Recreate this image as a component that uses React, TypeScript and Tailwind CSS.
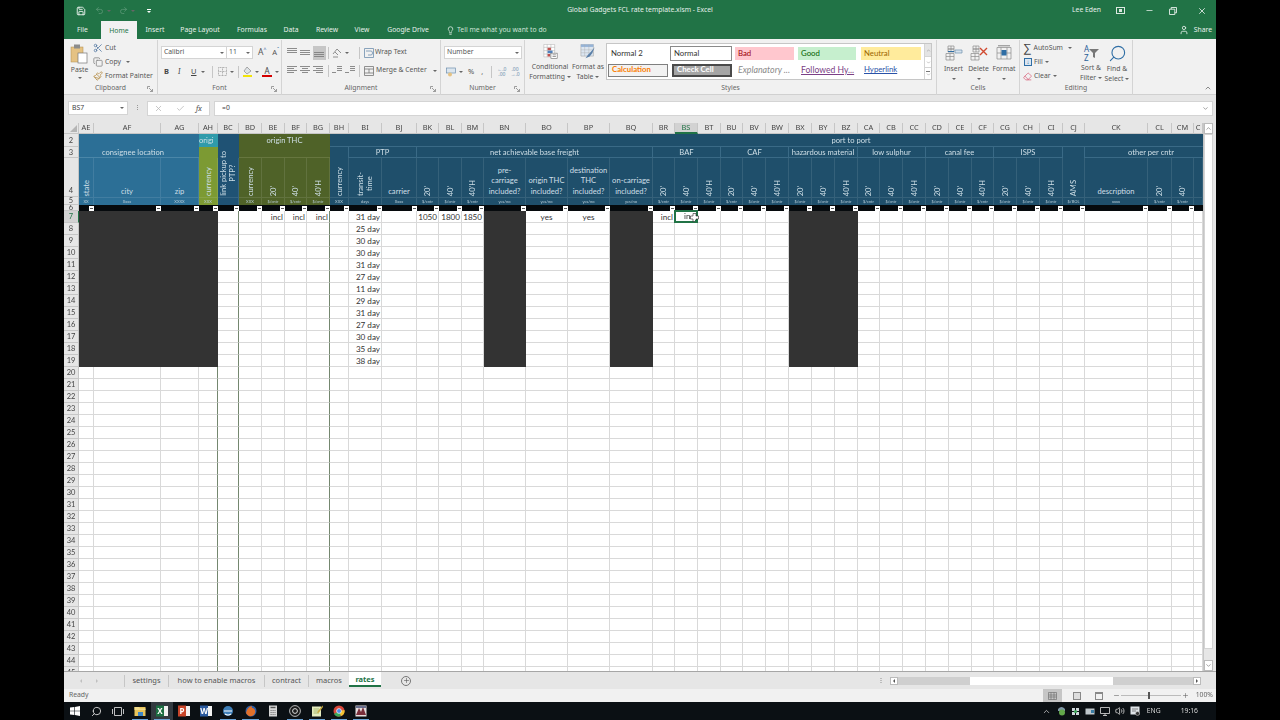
import React from "react";
import { ChevronDown, ChevronUp, Lightbulb, Minus, Plus, Redo2, Save, Search, Undo2, User, X, Check, Scissors, Copy, Paintbrush, Eraser, Volume2 } from "lucide-react";

const cols: [string, number][] = [
    ["AE", 15], ["AF", 67], ["AG", 38], ["AH", 19], ["BC", 21], ["BD", 23], ["BE", 23], ["BF", 22], ["BG", 23], ["BH", 19],
    ["BI", 33], ["BJ", 35], ["BK", 22], ["BL", 23], ["BM", 22], ["BN", 42], ["BO", 42], ["BP", 42], ["BQ", 43], ["BR", 22],
    ["BS", 23], ["BT", 23], ["BU", 22], ["BV", 23], ["BW", 23], ["BX", 23], ["BY", 23], ["BZ", 23], ["CA", 22], ["CB", 23],
    ["CC", 23], ["CD", 23], ["CE", 23], ["CF", 22], ["CG", 23], ["CH", 23], ["CI", 23], ["CJ", 22], ["CK", 63], ["CL", 24],
    ["CM", 22], ["C", 9],
];

const names = cols.map((c) => c[0]);
const spanWidth = (from: string, to: string) =>
    cols.slice(names.indexOf(from), names.indexOf(to) + 1).reduce((sum, c) => sum + c[1], 0);

const BLUE = "bg-[#2c6f96]";
const DARK = "bg-[#1f4f6b]";
const NAVY = "bg-[#1f5274]";
const OLIVE = "bg-[#4f6228]";
const LIME = "bg-[#7c9a33]";
const TEAL = "bg-[#2f9bab]";

const colColor = (name: string) => {
    if (["AE", "AF", "AG"].includes(name)) return BLUE;
    if (name === "AH") return LIME;
    if (name === "BC") return NAVY;
    if (["BD", "BE", "BF", "BG"].includes(name)) return OLIVE;
    return DARK;
};

type Band = { from: string; to: string; color: string; text?: string; extra?: string };

const band2: Band[] = [
    { from: "AE", to: "AG", color: BLUE },
    { from: "AH", to: "AH", color: TEAL, text: "origi", extra: "justify-start" },
    { from: "BC", to: "BC", color: NAVY },
    { from: "BD", to: "BG", color: OLIVE, text: "origin THC" },
    { from: "BH", to: "BJ", color: DARK, extra: "border-b border-[#3a6a86]" },
    { from: "BK", to: "C", color: DARK, text: "port to port", extra: "pl-[82px] border-b border-[#3a6a86]" },
];

const band3: Band[] = [
    { from: "AE", to: "AG", color: BLUE, text: "consignee location", extra: "pr-[12px] border-b border-[#4a86a8]" },
    { from: "AH", to: "AH", color: LIME },
    { from: "BC", to: "BC", color: NAVY },
    { from: "BD", to: "BG", color: OLIVE, extra: "border-b border-[#66763f]" },
    { from: "BH", to: "BH", color: DARK, extra: "border-r border-[#3a6a86]" },
    { from: "BI", to: "BJ", color: DARK, text: "PTP", extra: "border-r border-b border-[#3a6a86]" },
    { from: "BK", to: "BQ", color: DARK, text: "net achievable base freight", extra: "border-r border-b border-[#3a6a86]" },
    { from: "BR", to: "BT", color: DARK, text: "BAF", extra: "border-r border-b border-[#3a6a86]" },
    { from: "BU", to: "BW", color: DARK, text: "CAF", extra: "border-r border-b border-[#3a6a86]" },
    { from: "BX", to: "BZ", color: DARK, text: "hazardous material", extra: "border-r border-b border-[#3a6a86]" },
    { from: "CA", to: "CC", color: DARK, text: "low sulphur", extra: "border-r border-b border-[#3a6a86]" },
    { from: "CD", to: "CF", color: DARK, text: "canal fee", extra: "border-r border-b border-[#3a6a86]" },
    { from: "CG", to: "CI", color: DARK, text: "ISPS", extra: "border-r border-b border-[#3a6a86]" },
    { from: "CJ", to: "CJ", color: DARK, extra: "border-r border-[#3a6a86]" },
    { from: "CK", to: "C", color: DARK, text: "other per cntr", extra: "pl-[14px] border-b border-[#3a6a86]" },
];

const sizes = ["20'", "40'", "40'H"];
const vertical: Record<string, string[]> = {
    AE: ["state"], AH: ["currency"], BC: ["link pickup to", "PTP?"], BD: ["currency"], BH: ["currency"], BI: ["transit-", "time"], CJ: ["AMS"],
    CL: ["20'"], CM: ["40'"],
};
[["BE", "BF", "BG"], ["BK", "BL", "BM"], ["BR", "BS", "BT"], ["BU", "BV", "BW"], ["BX", "BY", "BZ"], ["CA", "CB", "CC"], ["CD", "CE", "CF"], ["CG", "CH", "CI"]].forEach((set) =>
    set.forEach((n, i) => (vertical[n] = [sizes[i]]))
);
const horizontal: Record<string, string[]> = {
    AF: ["city"], AG: ["zip"], BJ: ["carrier"], BN: ["pre-", "carriage", "included?"], BO: ["origin THC", "included?"],
    BP: ["destination", "THC", "included?"], BQ: ["on-carriage", "included?"], CK: ["description"],
};

const unitFor = (n: string) => {
    if (n === "AE") return "XX";
    if (n === "AF" || n === "BJ") return "Xxxx";
    if (n === "AG") return "XXXX";
    if (["AH", "BD", "BH"].includes(n)) return "XXX";
    if (n === "BC" || n === "C") return "";
    if (n === "BI") return "days";
    if (["BN", "BO", "BP", "BQ"].includes(n)) return "yes/no";
    if (n === "CJ") return "$/BOL";
    if (n === "CK") return "xxxx";
    return "$/cntr";
};

const darkCols = ["AE", "AF", "AG", "AH", "BN", "BQ", "BX", "BY", "BZ"];
const days = [31, 25, 30, 30, 31, 27, 11, 29, 31, 27, 30, 35, 38];
const row7: Record<string, string> = { BE: "incl", BF: "incl", BG: "incl", BK: "1050", BL: "1800", BM: "1850", BR: "incl" };

const Caret = () => <span className="inline-block w-0 h-0 border-x-[2px] border-t-[2px] border-x-transparent border-t-[#666]" />;

const Launcher = () => (
    <svg width="6" height="6" viewBox="0 0 6 6" fill="none" stroke="#888" strokeWidth="0.8">
        <path d="M0.5 3V0.5H3M2 2L5.5 5.5M5.5 3V5.5H3" />
    </svg>
);

const Lines = ({ rows }: { rows: [number, number, number][] }) => (
    <svg width="11" height="11" viewBox="0 0 11 11" stroke="#808080" strokeWidth="0.9">
        {rows.map(([y, a, b], i) => (
            <path key={i} d={`M${a} ${y}.5H${b}`} />
        ))}
    </svg>
);

const Sep = ({ cls = "h-[12px]" }: { cls?: string }) => <span className={`block w-px bg-[#c6c6c6] ${cls}`} />;

const Group = ({ w, label, launcher, children }: { w: string; label: string; launcher?: boolean; children: React.ReactNode }) => (
    <div className={`${w} flex flex-col h-[55px] border-r border-[#d4d4d4] whitespace-nowrap`}>
        <div className="h-[42px] flex">{children}</div>
        <div className="h-[13px] flex items-center justify-center relative text-[6.8px] text-[#666]">
            {label}
            {launcher && (
                <span className="absolute right-[4px] top-[4px] flex">
                    <Launcher />
                </span>
            )}
        </div>
    </div>
);

const TitleBar = () => (
    <div className="h-[39px] bg-[#217346] flex flex-col text-[#e8f1ec] shrink-0">
        <div className="h-[21px] flex items-center">
            <div className="flex-1 flex items-center gap-[8px]">
                <Save size={10} className="text-white ml-[12px]" />
                <span className="flex items-center gap-[3px] ml-[1px] text-[#5f9a79]">
                    <Undo2 size={9} />
                    <Caret />
                </span>
                <span className="flex items-center gap-[3px] text-[#5f9a79]">
                    <Redo2 size={9} />
                    <Caret />
                </span>
                <span className="flex flex-col items-center ml-[4px] gap-[1px]">
                    <span className="w-[4px] h-px bg-white" />
                    <span className="w-0 h-0 border-x-[2px] border-t-[2px] border-x-transparent border-t-white" />
                </span>
            </div>
            <span className="text-[6.8px]">Global Gadgets FCL rate template.xlsm - Excel</span>
            <div className="flex-1 flex items-center justify-end text-[6.8px]">
                <span>Lee Eden</span>
                <span className="w-[9px] h-[7px] ml-[15px] border border-[#dbe8e0] flex items-center justify-center">
                    <span className="w-[3px] h-[3px] bg-[#dbe8e0]" />
                </span>
                <Minus size={9} className="ml-[20px]" />
                <svg className="ml-[15px]" width="8" height="8" viewBox="0 0 8 8" fill="none" stroke="#fff" strokeWidth="0.8">
                    <path d="M0.5 2.2H5.8V7.5H0.5ZM2.2 2.2V0.5H7.5V5.8H5.8" />
                </svg>
                <X size={10} className="ml-[20px] mr-[9px]" />
            </div>
        </div>
        <div className="h-[18px] flex items-center text-[6.8px]">
            <span className="w-[37px] text-center">File</span>
            <span className="w-[36px] h-[18px] leading-[19px] text-center bg-[#f1f1f1] text-[#217346]">Home</span>
            <span className="w-[36px] text-center">Insert</span>
            <span className="w-[54px] text-center">Page Layout</span>
            <span className="w-[50px] text-center">Formulas</span>
            <span className="w-[28px] text-center">Data</span>
            <span className="w-[44px] text-center">Review</span>
            <span className="w-[26px] text-center">View</span>
            <span className="w-[66px] text-center">Google Drive</span>
            <Lightbulb size={9} className="ml-[5px]" />
            <span className="ml-[2px] text-[#cfe3d8]">Tell me what you want to do</span>
            <div className="flex-1 flex justify-end items-center pr-[4px]">
                <User size={10} />
                <span className="ml-[5px]">Share</span>
            </div>
        </div>
    </div>
);

const PasteIcon = () => (
    <svg width="19" height="20" viewBox="0 0 19 20">
        <rect x="1" y="3" width="12" height="15" fill="#e5c283" stroke="#b08c4e" strokeWidth="0.5" />
        <rect x="4" y="0.5" width="6" height="4" fill="#8c8c8c" />
        <rect x="8" y="9" width="9" height="10" fill="#fff" stroke="#777" strokeWidth="0.7" />
    </svg>
);

const ClipboardGroup = () => (
    <Group w="w-[94px]" label="Clipboard" launcher>
        <div className="w-[28px] flex flex-col items-center pl-[3px] pt-[4px]">
            <PasteIcon />
            <span className="text-[6.8px] text-[#555] mt-[1px] leading-[9px]">Paste</span>
            <span className="mt-[3px] flex">
                <Caret />
            </span>
        </div>
        <div className="flex flex-col text-[6.8px] text-[#555] pt-[2px] gap-[2px] ml-[1px]">
            <span className="flex items-center h-[12px] gap-[2px]">
                <Scissors size={10} className="text-[#5c7ea6]" />
                Cut
            </span>
            <span className="flex items-center h-[12px] gap-[2px]">
                <Copy size={10} className="text-[#888]" />
                Copy
                <span className="ml-[3px] flex">
                    <Caret />
                </span>
            </span>
            <span className="flex items-center h-[12px] gap-[2px]">
                <Paintbrush size={10} className="text-[#b8914e]" />
                Format Painter
            </span>
        </div>
    </Group>
);

const FontGroup = () => (
    <Group w="w-[124px]" label="Font" launcher>
        <div className="flex flex-col pl-[3px] pt-[6px]">
            <div className="flex items-center h-[13px]">
                <div className="w-[66px] h-[13px] bg-white border border-[#d4d4d4] flex items-center justify-between px-[2px] text-[6.8px] text-[#555]">
                    Calibri
                    <Caret />
                </div>
                <div className="w-[26px] h-[13px] bg-white border border-[#d4d4d4] border-l-0 flex items-center justify-between px-[2px] text-[6.8px] text-[#555]">
                    11
                    <Caret />
                </div>
                <span className="ml-[5px] text-[8.5px] text-[#555]">A</span>
                <span className="text-[5px] -mt-[5px] text-[#2a6099]">^</span>
                <span className="ml-[6px] text-[7.5px] text-[#555]">A</span>
                <span className="text-[5px] -mt-[5px] text-[#2a6099]">ˇ</span>
            </div>
            <div className="flex items-center h-[13px] mt-[6px] text-[7.5px] text-[#444] pl-[3px]">
                <span className="font-bold w-[14px]">B</span>
                <span className="italic font-serif w-[13px]">I</span>
                <span className="underline w-[10px]">U</span>
                <Caret />
                <span className="ml-[7px]">
                    <Sep />
                </span>
                <svg className="ml-[5px]" width="9" height="9" viewBox="0 0 9 9" fill="none" stroke="#999" strokeWidth="0.7" strokeDasharray="1 0.5">
                    <path d="M0.5 0.5H8.5V8.5H0.5ZM4.5 0.5V8.5M0.5 4.5H8.5" />
                </svg>
                <span className="ml-[3px] flex">
                    <Caret />
                </span>
                <span className="ml-[4px]">
                    <Sep />
                </span>
                <svg className="ml-[3px]" width="11" height="11" viewBox="0 0 11 11">
                    <path d="M5 1L9 5L5 8L2 5Z" fill="#dfe4e8" stroke="#777" strokeWidth="0.6" />
                    <rect x="1" y="9" width="9" height="2" fill="#f2e409" />
                </svg>
                <span className="ml-[2px] flex">
                    <Caret />
                </span>
                <span className="ml-[3px] w-[10px] flex flex-col items-center leading-[8px] text-[8px]">
                    A<span className="w-[10px] h-[2px] bg-[#d40000]" />
                </span>
                <span className="ml-[3px] flex">
                    <Caret />
                </span>
            </div>
        </div>
    </Group>
);

const AlignmentGroup = () => (
    <Group w="w-[159px]" label="Alignment" launcher>
        <div className="flex flex-col pl-[5px] pt-[5px]">
            <div className="flex items-center h-[15px]">
                <span className="w-[13px] flex">
                    <Lines rows={[[1, 0, 10], [3, 0, 10], [5, 0, 10]]} />
                </span>
                <span className="w-[13px] flex">
                    <Lines rows={[[3, 0, 10], [5, 0, 10], [7, 0, 10]]} />
                </span>
                <span className="w-[13px] h-[14px] bg-[#c6c6c6] flex items-center justify-center">
                    <Lines rows={[[5, 0, 10], [7, 0, 10], [9, 0, 10]]} />
                </span>
                <span className="ml-[2px]">
                    <Sep />
                </span>
                <svg className="ml-[3px]" width="10" height="10" viewBox="0 0 10 10" fill="none" stroke="#777" strokeWidth="0.8">
                    <path d="M1 6L5 1L9 5M3 4L6 7M1 9L6 9" />
                </svg>
                <span className="ml-[3px] flex">
                    <Caret />
                </span>
                <span className="ml-[10px]">
                    <Sep />
                </span>
                <svg className="ml-[4px]" width="10" height="10" viewBox="0 0 10 10" fill="none" stroke="#6e8fae" strokeWidth="0.8">
                    <path d="M0.5 0.5H9.5V9.5H0.5ZM2 3H7Q8.5 3 8.5 5T7 7H4" />
                </svg>
                <span className="ml-[1px] text-[6.8px] text-[#555]">Wrap Text</span>
            </div>
            <div className="flex items-center h-[15px] mt-[3px]">
                <span className="w-[13px] flex">
                    <Lines rows={[[1, 0, 10], [3, 0, 7], [5, 0, 10], [7, 0, 7]]} />
                </span>
                <span className="w-[13px] flex">
                    <Lines rows={[[1, 0, 10], [3, 2, 8], [5, 0, 10], [7, 2, 8]]} />
                </span>
                <span className="w-[13px] flex">
                    <Lines rows={[[1, 0, 10], [3, 3, 10], [5, 0, 10], [7, 3, 10]]} />
                </span>
                <span className="ml-[2px]">
                    <Sep />
                </span>
                <span className="ml-[3px] w-[13px] flex">
                    <Lines rows={[[1, 5, 10], [3, 5, 10], [5, 5, 10], [7, 0, 4]]} />
                </span>
                <span className="w-[13px] flex">
                    <Lines rows={[[1, 5, 10], [3, 5, 10], [5, 5, 10], [7, 0, 4]]} />
                </span>
                <span className="ml-[1px]">
                    <Sep />
                </span>
                <svg className="ml-[4px]" width="10" height="10" viewBox="0 0 10 10" fill="none" stroke="#777" strokeWidth="0.8">
                    <path d="M0.5 0.5H9.5V9.5H0.5ZM0.5 3H9.5M0.5 7H9.5M5 3V7" />
                </svg>
                <span className="ml-[2px] text-[6.8px] text-[#555]">Merge &amp; Center</span>
                <span className="ml-[6px] flex">
                    <Caret />
                </span>
            </div>
        </div>
    </Group>
);

const NumberGroup = () => (
    <Group w="w-[84px]" label="Number" launcher>
        <div className="flex flex-col pl-[3px] pt-[6px]">
            <div className="w-[78px] h-[13px] bg-white border border-[#d4d4d4] flex items-center justify-between px-[2px] text-[6.8px] text-[#555]">
                Number
                <Caret />
            </div>
            <div className="flex items-center h-[13px] mt-[6px] text-[7.5px] text-[#555] pl-[2px]">
                <svg width="10" height="10" viewBox="0 0 10 10">
                    <rect x="0.5" y="1" width="9" height="5" fill="#dce6ef" stroke="#6e8fae" strokeWidth="0.7" />
                    <circle cx="4" cy="7.5" r="2" fill="#e5c283" />
                </svg>
                <span className="ml-[3px] flex">
                    <Caret />
                </span>
                <span className="ml-[5px]">%</span>
                <span className="ml-[7px]">,</span>
                <span className="ml-[8px]">
                    <Sep />
                </span>
                <span className="ml-[5px] text-[5px] leading-[5px] text-center text-[#6e8fae]">
                    ←.0
                    <br />
                    .00
                </span>
                <span className="ml-[4px] text-[5px] leading-[5px] text-center text-[#6e8fae]">
                    .00
                    <br />
                    →.0
                </span>
            </div>
        </div>
    </Group>
);

const StyleCell = ({ cls, children }: { cls: string; children: React.ReactNode }) => (
    <span className={`flex items-center px-[3px] leading-none h-[13px] ${cls}`}>{children}</span>
);

const StylesGroup = () => (
    <Group w="w-[412px]" label="Styles">
        <div className="w-[40px] flex flex-col items-center pt-[4px] ml-[5px] text-[6.8px] leading-[10px] text-[#555]">
            <svg width="17" height="18" viewBox="0 0 17 18">
                <path d="M0.5 0.5H13.5V15.5H0.5ZM4.5 0.5V15.5M9 0.5V15.5M0.5 4H13.5M0.5 8H13.5M0.5 12H13.5" fill="#fff" stroke="#aaa" strokeWidth="0.6" />
                <rect x="5" y="4.5" width="4" height="3" fill="#c0504d" />
                <rect x="5" y="8" width="6" height="3" fill="#4f81bd" />
                <rect x="5" y="12" width="3" height="3" fill="#c0504d" />
                <rect x="9" y="11" width="7.5" height="6.5" fill="#fff" stroke="#666" strokeWidth="0.7" />
                <path d="M11 13H15M11 15H15" stroke="#555" strokeWidth="0.7" />
            </svg>
            <span className="mt-[3px]">Conditional</span>
            <span className="flex items-center gap-[2px]">
                Formatting
                <Caret />
            </span>
        </div>
        <div className="w-[36px] flex flex-col items-center pt-[4px] text-[6.8px] leading-[10px] text-[#555]">
            <svg width="18" height="18" viewBox="0 0 18 18">
                <path d="M0.5 0.5H15.5V14.5H0.5Z" fill="#dce6f1" stroke="#999" strokeWidth="0.6" />
                <path d="M0.5 0.5H15.5V3.5H0.5Z" fill="#95b3d7" />
                <path d="M5 0.5V14.5M10 0.5V14.5M0.5 7H15.5M0.5 10.5H15.5" stroke="#aaa" strokeWidth="0.5" />
                <path d="M17 4L12 10L9 13L6 17L11 15L14 11Z" fill="#5a7fa8" />
            </svg>
            <span className="mt-[3px]">Format as</span>
            <span className="flex items-center gap-[2px]">
                Table
                <Caret />
            </span>
        </div>
        <div className="mt-[3px] w-[326px] h-[37px] bg-white border border-[#c6c6c6] flex">
            <div className="w-[318px] flex flex-col pt-[2px] pl-[1px] font-['Lato',sans-serif] text-[7.8px]">
                <div className="flex items-center h-[15px]">
                    <StyleCell cls="w-[62px] text-[#333]">Normal 2</StyleCell>
                    <StyleCell cls="w-[62px] h-[15px] border border-[#8a8a8a] text-[#333]">Normal</StyleCell>
                    <StyleCell cls="w-[59px] ml-[3px] bg-[#ffc7ce] text-[#9c0006]">Bad</StyleCell>
                    <StyleCell cls="w-[58px] ml-[4px] bg-[#c6efce] text-[#006100]">Good</StyleCell>
                    <StyleCell cls="w-[60px] ml-[5px] bg-[#ffeb9c] text-[#9c6500]">Neutral</StyleCell>
                </div>
                <div className="flex items-center h-[14px] mt-[2px]">
                    <StyleCell cls="w-[60px] bg-[#f2f2f2] border border-[#7f7f7f] text-[#fa7d00] font-bold">Calculation</StyleCell>
                    <StyleCell cls="w-[60px] ml-[4px] bg-[#a5a5a5] border-2 border-[#4a4a4a] text-white font-bold">Check Cell</StyleCell>
                    <StyleCell cls="w-[63px] ml-[3px] text-[#8a8a8a] italic text-[8.8px]">Explanatory ...</StyleCell>
                    <StyleCell cls="w-[62px] text-[#7b3f86] underline text-[8.6px]">Followed Hy...</StyleCell>
                    <StyleCell cls="w-[60px] ml-[1px] text-[#2a52a8] underline">Hyperlink</StyleCell>
                </div>
            </div>
            <div className="w-[7px] ml-auto flex flex-col border-l border-[#d4d4d4] text-[#777]">
                <span className="h-[12px] bg-[#e4e4e4] flex items-center justify-center">
                    <ChevronUp size={5} />
                </span>
                <span className="h-[12px] flex items-center justify-center border-y border-[#d4d4d4]">
                    <ChevronDown size={5} />
                </span>
                <span className="flex-1 flex flex-col items-center justify-center">
                    <span className="w-[4px] h-px bg-[#777]" />
                    <ChevronDown size={5} />
                </span>
            </div>
        </div>
    </Group>
);

const CellIcon = ({ kind }: { kind: "insert" | "delete" | "format" }) => (
    <svg width="18" height="16" viewBox="0 0 18 16" fill="none" stroke="#8a8a8a" strokeWidth="0.7">
        {kind === "format" ? (
            <>
                <path d="M2 2.5H16V14H2ZM6 2.5V14M12 2.5V14M2 8H16" />
                <rect x="6.5" y="5" width="5" height="5.5" fill="#2f6ea5" stroke="none" />
                <path d="M3 0.8H15" stroke="#555" />
            </>
        ) : (
            <>
                <path d="M1 8.5H9V15H1ZM5 8.5V15M1 11.5H9" />
                <path d="M3 1H9V4H3ZM3 4H9V7H3ZM6 1V7" />
                {kind === "insert" ? (
                    <>
                        <path d="M10 5H17V8H10Z" fill="#d7e3ee" stroke="#6e8fae" />
                        <path d="M9 6.5H3" stroke="#2f6ea5" strokeWidth="1" />
                    </>
                ) : (
                    <path d="M10 3L17 10M17 3L10 10" stroke="#d0492f" strokeWidth="1.4" />
                )}
            </>
        )}
    </svg>
);

const CellButton = ({ w, kind, label }: { w: string; kind: "insert" | "delete" | "format"; label: string }) => (
    <div className={`${w} flex flex-col items-center pt-[5px] text-[6.8px] leading-[9.5px] text-[#555]`}>
        <CellIcon kind={kind} />
        <span className="mt-[3px]">{label}</span>
        <span className="mt-[4px] flex">
            <Caret />
        </span>
    </div>
);

const EditingGroup = () => (
    <Group w="w-[113px]" label="Editing">
        <div className="w-[58px] flex flex-col text-[6.8px] text-[#555] pt-[2px] pl-[3px] gap-[2px]">
            <span className="flex items-center h-[12px] gap-[2px]">
                <span className="text-[12px] leading-none text-[#444]">∑</span>
                AutoSum
                <span className="ml-[3px] flex">
                    <Caret />
                </span>
            </span>
            <span className="flex items-center h-[12px] gap-[2px]">
                <span className="w-[8px] h-[8px] ml-[1px] bg-[#dce6f1] border border-[#2f6ea5] flex items-center justify-center text-[#2f6ea5] text-[6px] leading-none">↓</span>
                Fill
                <Caret />
            </span>
            <span className="flex items-center h-[12px] gap-[2px]">
                <Eraser size={9} className="text-[#d9607a]" />
                Clear
                <Caret />
            </span>
        </div>
        <div className="w-[26px] flex flex-col items-center pt-[4px] text-[6.8px] leading-[10px] text-[#555]">
            <div className="flex items-center h-[20px] ml-[1px]">
                <span className="flex flex-col text-[8px] leading-[9px]">
                    <span className="text-[#2a6099]">A</span>
                    <span className="text-[#2a6099]">Z</span>
                </span>
                <svg width="10" height="9" viewBox="0 0 10 9">
                    <path d="M0 0H10L6 4V9L4 8V4Z" fill="#777" />
                </svg>
            </div>
            <span className="mt-[1px]">Sort &amp;</span>
            <span className="flex items-center gap-[2px]">
                Filter
                <Caret />
            </span>
        </div>
        <div className="w-[26px] flex flex-col items-center pt-[4px] text-[6.8px] leading-[10px] text-[#555]">
            <span className="h-[20px] flex items-center">
                <Search size={19} className="text-[#2f6ea5] -scale-x-100" strokeWidth={1.4} />
            </span>
            <span className="mt-[1px]">Find &amp;</span>
            <span className="flex items-center gap-[2px]">
                Select
                <Caret />
            </span>
        </div>
    </Group>
);

const Ribbon = () => (
    <div className="h-[56px] bg-[#f1f1f1] border-b border-[#d0d0d0] flex items-start shrink-0 pt-[1px]">
        <ClipboardGroup />
        <FontGroup />
        <AlignmentGroup />
        <NumberGroup />
        <StylesGroup />
        <Group w="w-[83px]" label="Cells">
            <div className="flex pl-[4px]">
                <CellButton w="w-[25px]" kind="insert" label="Insert" />
                <CellButton w="w-[25px]" kind="delete" label="Delete" />
                <CellButton w="w-[26px]" kind="format" label="Format" />
            </div>
        </Group>
        <EditingGroup />
        <div className="flex-1 h-[55px] flex items-end justify-end pr-[4px] pb-[3px] text-[#555]">
            <ChevronUp size={8} />
        </div>
    </div>
);

const FormulaBar = () => (
    <div className="h-[28px] bg-[#e6e6e6] flex items-start pt-[6px] shrink-0 text-[6.8px] text-[#444]">
        <div className="ml-[4px] w-[60px] h-[14px] bg-white border border-[#d4d4d4] flex items-center justify-between px-[3px]">
            BS7
            <Caret />
        </div>
        <span className="ml-[9px] mt-[4px] flex flex-col gap-[1px]">
            <span className="w-[1px] h-[1px] bg-[#999]" />
            <span className="w-[1px] h-[1px] bg-[#999]" />
            <span className="w-[1px] h-[1px] bg-[#999]" />
        </span>
        <div className="ml-[9px] w-[63px] h-[15px] bg-white border border-[#d4d4d4] flex items-center text-[#b5b5b5]">
            <X size={9} className="ml-[6px]" />
            <Check size={9} className="ml-[13px]" />
            <span className="ml-[11px] italic font-serif text-[#555] text-[8px]">fx</span>
        </div>
        <div className="ml-[4px] flex-1 h-[15px] bg-white border border-[#d4d4d4] flex items-center justify-between pl-[7px] pr-[3px] mr-[3px]">
            =0
            <ChevronDown size={7} className="text-[#666]" />
        </div>
    </div>
);

const RowHead = ({ num, selected, cls = "items-center pt-[1px] leading-none" }: { num?: number; selected?: boolean; cls?: string }) => (
    <div
        className={`w-[15px] shrink-0 flex justify-center border-r border-b text-[7.5px] overflow-hidden ${
            selected ? "bg-[#d2d2d2] border-r-[#217346] border-b-[#c6c6c6] text-[#217346]" : "bg-[#e6e6e6] border-[#c6c6c6] text-[#444]"
        } ${cls}`}
    >
        {num}
    </div>
);

const BandRow = ({ num, h, bands }: { num: number; h: string; bands: Band[] }) => (
    <div className={`flex ${h}`}>
        <RowHead num={num} />
        {bands.map((b) => (
            <div
                key={b.from + "2" + b.text}
                className={`${b.color} ${b.extra ?? ""} flex items-center justify-center overflow-hidden whitespace-nowrap pt-[1px] text-[7.6px] text-[#cfdfe7]`}
                style={{ width: spanWidth(b.from, b.to) }}
            >
                {b.text}
            </div>
        ))}
    </div>
);

const HeadingRow = () => (
    <div className="flex h-[39px]">
        <RowHead num={4} cls="items-end leading-[11px]" />
        {cols.map(([name, w]) => (
            <div
                key={name}
                className={`${colColor(name)} flex justify-center items-end pb-[1px] text-[7.6px] leading-[10.5px] text-center text-[#cfdfe7] border-r border-white/10 whitespace-nowrap`}
                style={{ width: w }}
            >
                {vertical[name] && (
                    <span className="[writing-mode:vertical-rl] rotate-180 leading-[9px]">
                        {vertical[name].map((line) => (
                            <span key={line} className="block">
                                {line}
                            </span>
                        ))}
                    </span>
                )}
                {horizontal[name] && (
                    <span className="font-normal">
                        {horizontal[name].map((line) => (
                            <span key={line} className="block">
                                {line}
                            </span>
                        ))}
                    </span>
                )}
            </div>
        ))}
    </div>
);

const UnitRow = () => (
    <div className="flex h-[8px]">
        <RowHead num={5} cls="items-center text-[6px] leading-none" />
        {cols.map(([name, w]) => (
            <div
                key={name}
                className={`${colColor(name)} flex justify-center items-center text-[4px] leading-none text-[#b8cdd8] border-t border-r border-white/10 overflow-hidden whitespace-nowrap`}
                style={{ width: w }}
            >
                {unitFor(name)}
            </div>
        ))}
    </div>
);

const FilterRow = () => (
    <div className="flex h-[6px]">
        <RowHead cls="items-center text-[4px] leading-none" num={6} />
        {cols.map(([name, w]) => (
            <div key={name} className="bg-[#060a0d] flex justify-end items-center" style={{ width: w }}>
                {name !== "C" && (
                    <span className="w-[5px] h-[5px] bg-white flex items-center justify-center">
                        <span className="w-[3px] h-px bg-[#555]" />
                    </span>
                )}
            </div>
        ))}
    </div>
);

const lineRight = (name: string) => (["AH", "BC", "BG"].includes(name) ? "border-r-[#74876f]" : "border-r-[#d9d9d9]");

const DataRow = ({ num }: { num: number }) => {
    const filled = num >= 7 && num <= 19;
    return (
        <div className="flex h-[12px] shrink-0">
            <RowHead num={num} selected={num === 7} />
            {cols.map(([name, w]) => {
                const dark = filled && darkCols.includes(name);
                const leftLine = name === "AG" && !filled;
                const cursor = num === 7 && name === "BS";
                let text = num === 7 ? row7[name] : "";
                if (filled && name === "BI") text = `${days[num - 7]} day`;
                if (num === 7 && (name === "BO" || name === "BP")) text = "yes";
                const align = name === "BO" || name === "BP" ? "justify-center" : "justify-end pr-[1px]";
                return (
                    <div
                        key={name}
                        className={`relative flex items-center ${align} pt-[1px] text-[8.1px] leading-none whitespace-nowrap text-[#333] border-r border-b ${
                            dark ? "bg-[#333333] border-[#333333]" : `bg-white border-b-[#d9d9d9] ${lineRight(name)}`
                        } ${leftLine ? "border-r-[#74876f]" : ""}`}
                        style={{ width: w }}
                    >
                        {text}
                        {cursor && (
                            <span className="absolute -inset-px border-2 border-[#217346] flex items-center pl-[8px] text-[8.1px] text-[#333] z-10">
                                in
                                <svg className="absolute left-[14px] top-[1px]" width="9" height="9" viewBox="0 0 9 9">
                                    <path d="M3 0.5H6V3H8.5V6H6V8.5H3V6H0.5V3H3Z" fill="#fff" stroke="#222" strokeWidth="0.6" />
                                </svg>
                                <span className="absolute -right-[2px] -bottom-[2px] w-[3px] h-[3px] bg-[#217346]" />
                            </span>
                        )}
                    </div>
                );
            })}
        </div>
    );
};

const Sheet = () => {
    const rows = Array.from({ length: 39 }, (_, i) => i + 7);
    return (
        <div className="h-[549px] flex shrink-0 border-b border-[#a6a6a6]">
            <div className="w-[1139px] flex flex-col overflow-hidden font-['Lato',sans-serif]">
                <div className="flex h-[11px] shrink-0">
                    <div className="w-[15px] shrink-0 bg-[#e6e6e6] border-r border-b border-[#c6c6c6] flex items-end justify-end p-[1px]">
                        <svg width="7" height="7" viewBox="0 0 7 7">
                            <path d="M7 0V7H0Z" fill="#b5b5b5" />
                        </svg>
                    </div>
                    {cols.map(([name, w]) => (
                        <div
                            key={name}
                            className={`flex items-center justify-center overflow-hidden text-[7.4px] border-r font-['Noto_Sans',sans-serif] ${
                                name === "BS" ? "bg-[#d2d2d2] text-[#217346] border-b-2 border-b-[#217346] border-r-[#c6c6c6]" : "bg-[#e6e6e6] text-[#444] border-[#c6c6c6] border-b"
                            }`}
                            style={{ width: w }}
                        >
                            {name}
                        </div>
                    ))}
                </div>
                <BandRow num={2} h="h-[13px]" bands={band2} />
                <BandRow num={3} h="h-[11px]" bands={band3} />
                <HeadingRow />
                <UnitRow />
                <FilterRow />
                {rows.map((n) => (
                    <DataRow key={n} num={n} />
                ))}
            </div>
            <div className="w-[13px] flex flex-col bg-[#e6e6e6] border-l border-[#c6c6c6] pr-[3px] text-[#666]">
                <span className="h-[11px] bg-white border border-[#bbb] flex items-center justify-center">
                    <ChevronUp size={7} />
                </span>
                <span className="h-[515px] bg-white border border-[#d4d4d4]" />
                <span className="flex-1" />
                <span className="h-[11px] bg-white border border-[#bbb] flex items-center justify-center">
                    <ChevronDown size={7} />
                </span>
            </div>
        </div>
    );
};

const TabBar = () => (
    <div className="h-[17px] bg-[#e6e6e6] flex items-center shrink-0 text-[7.5px] text-[#555]">
        <span className="ml-[16px] w-[16px]">
            <span className="block w-0 h-0 border-y-[2px] border-r-[2px] border-y-transparent border-r-[#c0c0c0]" />
        </span>
        <span className="w-[28px]">
            <span className="block w-0 h-0 border-y-[2px] border-l-[2px] border-y-transparent border-l-[#c0c0c0]" />
        </span>
        <Sep />
        <span className="w-[43px] text-center">settings</span>
        <Sep />
        <span className="w-[95px] text-center">how to enable macros</span>
        <Sep />
        <span className="w-[43px] text-center">contract</span>
        <Sep />
        <span className="w-[40px] text-center">macros</span>
        <span className="self-start w-[32px] h-[15px] leading-[14px] text-center bg-white border-b-2 border-[#217346] text-[#217346] font-bold">rates</span>
        <span className="ml-[20px] w-[10px] h-[10px] rounded-full border border-[#777] flex items-center justify-center">
            <Plus size={7} />
        </span>
        <span className="ml-[469px] flex flex-col gap-[1px]">
            <span className="w-[2px] h-[1px] bg-[#bbb]" />
            <span className="w-[2px] h-[1px] bg-[#bbb]" />
            <span className="w-[2px] h-[1px] bg-[#bbb]" />
        </span>
        <span className="ml-[8px] w-[8px] h-[8px] bg-white border border-[#bbb] flex items-center justify-center">
            <span className="w-0 h-0 border-y-[2px] border-r-[2px] border-y-transparent border-r-[#555]" />
        </span>
        <div className="w-[295px] h-[8px] bg-[#cfcfcf] flex">
            <span className="ml-[72px] w-[143px] h-[8px] bg-white" />
        </div>
        <span className="w-[8px] h-[8px] bg-white border border-[#bbb] flex items-center justify-center">
            <span className="w-0 h-0 border-y-[2px] border-l-[2px] border-y-transparent border-l-[#555]" />
        </span>
    </div>
);

const StatusBar = () => (
    <div className="h-[13px] bg-[#f1f1f1] flex items-center shrink-0 text-[6.8px] text-[#666]">
        <span className="ml-[5px]">Ready</span>
        <div className="ml-auto flex items-center">
            <span className="w-[19px] h-[13px] bg-[#c6c6c6] flex items-center justify-center">
                <svg width="9" height="8" viewBox="0 0 9 8" fill="none" stroke="#666" strokeWidth="0.6">
                    <path d="M0.5 0.5H8.5V7.5H0.5ZM3 0.5V7.5M6 0.5V7.5M0.5 3H8.5M0.5 5H8.5" />
                </svg>
            </span>
            <span className="ml-[11px] w-[8px] h-[8px] border border-[#888] bg-[#ddd]" />
            <span className="ml-[14px] w-[8px] h-[8px] border border-[#888] border-t-2" />
            <Minus size={7} className="ml-[10px]" />
            <span className="ml-[1px] w-[60px] h-[8px] flex items-center">
                <span className="w-[27px] h-px bg-[#bbb]" />
                <span className="w-[2px] h-[7px] bg-[#555]" />
                <span className="w-[31px] h-px bg-[#bbb]" />
            </span>
            <Plus size={7} className="ml-[1px]" />
            <span className="ml-[7px] mr-[3px]">100%</span>
        </div>
    </div>
);

const TaskTile = ({ children, line = true, active }: { children?: React.ReactNode; line?: boolean; active?: boolean }) => (
    <div className={`w-[22.1px] h-[18px] flex items-center justify-center relative ${active ? "bg-[#333a40]" : ""}`}>
        <svg width="12" height="12" viewBox="0 0 12 12">
            {children}
        </svg>
        {line && <span className="absolute bottom-0 left-[3px] right-[3px] h-px bg-[#6aa3d6]" />}
    </div>
);

const Badge = ({ fill, letter }: { fill: string; letter: string }) => (
    <>
        <rect x="4" y="1" width="8" height="10" fill="#f2f2f2" />
        <rect x="0" y="0.5" width="8" height="11" fill={fill} />
        <text x="4" y="8.5" fontSize="8" fontWeight="700" fill="#fff" textAnchor="middle">
            {letter}
        </text>
    </>
);

const Taskbar = () => (
    <div className="h-[18px] bg-[#0b1014] flex items-center shrink-0 text-[#d6d6d6]">
        <div className="w-[22px] flex justify-center">
            <svg width="10" height="10" viewBox="0 0 10 10" fill="#fff">
                <path d="M0 1.5L4.3 1V4.7H0ZM4.9 0.9L10 0V4.7H4.9ZM0 5.3H4.3V9L0 8.5ZM4.9 5.3H10V10L4.9 9.1Z" />
            </svg>
        </div>
        <div className="w-[21px] flex justify-center">
            <Search size={11} className="-scale-x-100" />
        </div>
        <div className="w-[22px] flex justify-center">
            <svg width="12" height="9" viewBox="0 0 12 9" fill="none" stroke="#eee" strokeWidth="0.8">
                <path d="M2.5 0.5H9.5V8.5H2.5ZM0.5 2V7M11.5 2V7" />
            </svg>
        </div>
        <div className="flex items-center">
            <TaskTile>
                <path d="M0.5 2H11.5V11H0.5Z" fill="#e8c45a" />
                <path d="M0.5 2H5L6 3.5H11.5V5H0.5Z" fill="#f2dc8c" />
                <rect x="4" y="7" width="5" height="4" fill="#3d86c6" />
            </TaskTile>
            <TaskTile active>
                <Badge fill="#1d6f42" letter="X" />
            </TaskTile>
            <TaskTile line={false}>
                <Badge fill="#c8452a" letter="P" />
            </TaskTile>
            <TaskTile line={false}>
                <Badge fill="#2b5a9e" letter="W" />
            </TaskTile>
            <TaskTile>
                <circle cx="6" cy="6" r="5" fill="#3f7fb8" />
                <path d="M2 6H10M3 9Q6 11 9 9" stroke="#fff" strokeWidth="1.2" fill="none" />
            </TaskTile>
            <TaskTile>
                <circle cx="6" cy="6" r="5.5" fill="#2d5fa8" />
                <path d="M1 8Q2 2 7 1Q6 3 8 3Q11 5 10 8Q8 12 4 11Q2 10 1 8Z" fill="#e0702a" />
            </TaskTile>
            <TaskTile line={false}>
                <rect x="2" y="0.5" width="8" height="11" fill="#d6d6d6" />
                <path d="M3.5 2.5H8.5" stroke="#555" strokeWidth="1.4" />
                <path d="M3.5 5.5H8.5M3.5 7.5H8.5M3.5 9.5H8.5" stroke="#777" strokeWidth="1" strokeDasharray="1.2 0.8" />
            </TaskTile>
            <TaskTile>
                <circle cx="6" cy="6" r="5.4" fill="#1a1a1a" stroke="#ddd" strokeWidth="0.8" />
                <circle cx="6" cy="6" r="2.4" fill="none" stroke="#ddd" strokeWidth="1" />
            </TaskTile>
            <TaskTile>
                <rect x="1" y="1.5" width="9" height="10" fill="#e6ecc0" />
                <path d="M2.5 4H8M2.5 6H8M2.5 8H8" stroke="#8aa04a" strokeWidth="0.7" />
                <path d="M11.5 0.5L7 6L6 8L8 7.5L12 2Z" fill="#c9a93f" />
            </TaskTile>
            <TaskTile>
                <circle cx="6" cy="6" r="5.5" fill="#d9483b" />
                <path d="M6 6L1 9A5.5 5.5 0 0 0 8 11Z" fill="#3aa757" />
                <path d="M6 6L11.5 5A5.5 5.5 0 0 1 8 11Z" fill="#f2c232" />
                <circle cx="6" cy="6" r="2.4" fill="#4a8ae8" stroke="#fff" strokeWidth="0.7" />
            </TaskTile>
            <TaskTile>
                <rect x="0.5" y="0.5" width="11" height="11" fill="#e6dede" />
                <path d="M1 10L4 3L6 7L8 2L11 10Z" fill="#7a2e3a" />
                <path d="M1 2H11" stroke="#33406e" strokeWidth="1.4" />
            </TaskTile>
        </div>
        <div className="ml-auto flex items-center text-[6.8px]">
            <ChevronUp size={9} />
            <svg className="ml-[6px]" width="9" height="10" viewBox="0 0 9 10">
                <path d="M1 3Q4.5 -1 8 3V5H1Z" fill="#7f97a8" />
                <circle cx="5" cy="6.5" r="3" fill="#63a84a" />
            </svg>
            <svg className="ml-[5px]" width="9" height="9" viewBox="0 0 9 9" fill="#cfd8dc">
                <path d="M1 1H4V4H1ZM5 1H8V4H5ZM1 5H4V8H1ZM5 5H8V8H5Z" />
                <circle cx="4.5" cy="4.5" r="1.6" fill="#3aa757" />
            </svg>
            <svg className="ml-[5px]" width="10" height="7" viewBox="0 0 10 7">
                <rect x="0.5" y="0.5" width="9" height="6" fill="#bfc7cc" />
                <rect x="6" y="2" width="3" height="3" fill="#3a7ea6" />
            </svg>
            <svg className="ml-[5px]" width="10" height="9" viewBox="0 0 10 9" fill="none" stroke="#e0e0e0" strokeWidth="0.8">
                <path d="M0.5 0.5H9.5V6.5H0.5ZM3 8.5H7M5 6.5V8.5" />
            </svg>
            <Volume2 size={10} className="ml-[5px]" />
            <svg className="ml-[5px]" width="10" height="10" viewBox="0 0 10 10">
                <rect x="0.5" y="0.5" width="9" height="8" fill="#dfe4e8" />
                <path d="M2 3H8M2 5H6" stroke="#555" strokeWidth="0.7" />
                <circle cx="7.5" cy="7.5" r="2" fill="#333" stroke="#ddd" strokeWidth="0.5" />
            </svg>
            <span className="ml-[7px]">ENG</span>
            <span className="ml-[20px] mr-[18px]">19:16</span>
        </div>
    </div>
);

const App = () => (
    <div className="w-[1280px] h-[720px] bg-black flex justify-center overflow-hidden font-['Noto_Sans',sans-serif]">
        <div className="w-[1152px] h-[720px] flex flex-col blur-[0.3px]">
            <TitleBar />
            <Ribbon />
            <FormulaBar />
            <Sheet />
            <TabBar />
            <StatusBar />
            <Taskbar />
        </div>
    </div>
);

export default App;
